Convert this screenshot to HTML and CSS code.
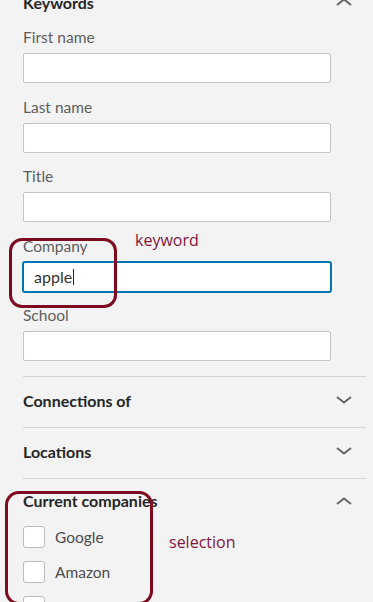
FILE: index.html
```html
<!DOCTYPE html>
<html>
<head>
<meta charset="utf-8">
<link rel="stylesheet" href="styles.css">
</head>
<body>
<div class="panel">
  <section class="group">
    <div class="group-head first">
      <h3 class="group-title">Keywords</h3>
      <svg class="chev" viewBox="0 0 16 8" width="16" height="8"><path d="M1 7 L8 1.5 L15 7" fill="none" stroke="#666" stroke-width="2"/></svg>
    </div>
    <div class="fields">
      <div class="field"><div class="label">First name</div><div class="input"></div></div>
      <div class="field"><div class="label">Last name</div><div class="input"></div></div>
      <div class="field"><div class="label">Title</div><div class="input"></div></div>
      <div class="field"><div class="label">Company</div><div class="input focused"><span class="val">apple</span><span class="caret"></span></div></div>
      <div class="field"><div class="label">School</div><div class="input"></div></div>
    </div>
  </section>
  <section class="group bordered">
    <div class="group-head">
      <h3 class="group-title">Connections of</h3>
      <svg class="chev" viewBox="0 0 16 8" width="16" height="8"><path d="M1 1 L8 6.5 L15 1" fill="none" stroke="#666" stroke-width="2"/></svg>
    </div>
  </section>
  <section class="group bordered">
    <div class="group-head">
      <h3 class="group-title">Locations</h3>
      <svg class="chev" viewBox="0 0 16 8" width="16" height="8"><path d="M1 1 L8 6.5 L15 1" fill="none" stroke="#666" stroke-width="2"/></svg>
    </div>
  </section>
  <section class="group bordered">
    <div class="group-head short">
      <h3 class="group-title">Current companies</h3>
      <svg class="chev" viewBox="0 0 16 8" width="16" height="8"><path d="M1 7 L8 1.5 L15 7" fill="none" stroke="#666" stroke-width="2"/></svg>
    </div>
    <ul class="checks">
      <li class="check"><span class="box"></span><span class="check-label">Google</span></li>
      <li class="check"><span class="box"></span><span class="check-label">Amazon</span></li>
      <li class="check"><span class="box"></span></li>
    </ul>
  </section>
</div>
<div class="note">
  <div class="ring ring-keyword"></div>
  <span class="note-text text-keyword">keyword</span>
  <div class="ring ring-selection"></div>
  <span class="note-text text-selection">selection</span>
</div>
</body>
</html>
```
FILE: styles.css
```css
html, body {
  margin: 0;
  padding: 0;
  background: #f3f3f3;
  height: 602px;
  overflow: hidden;
}
body {
  font-family: Lato, "Liberation Sans", sans-serif;
  position: relative;
}
.panel {
  margin-top: -23px;
  padding: 0 7px 0 23px;
}
.group.bordered {
  border-top: 1px solid #d4d4d4;
}
.group-head {
  box-sizing: border-box;
  height: 50px;
  padding-bottom: 4px;
  display: flex;
  align-items: center;
  justify-content: space-between;
}
.group-head.first {
  padding-bottom: 0;
}
.group-head.short {
  height: 47px;
}
.group-title {
  margin: 0;
  font-size: 16px;
  font-weight: 700;
  color: #262626;
}
.chev {
  margin-right: 14px;
  display: block;
}
.fields {
  padding-bottom: 15px;
}
.field + .field {
  margin-top: 13.5px;
}
.label {
  font-size: 15.5px;
  line-height: 20px;
  color: #5e5e5e;
  margin-bottom: 6px;
}
.input {
  box-sizing: border-box;
  width: 308px;
  height: 30px;
  background: #fff;
  border: 1px solid #c4c4c4;
  border-radius: 2px;
  display: flex;
  align-items: center;
  padding-left: 10px;
}
.input.focused {
  border: 2px solid #0077b5;
  width: 310px;
  height: 32px;
  margin: -1px 0 -1px -1px;
  border-radius: 3px;
}
.val {
  font-size: 16px;
  color: #333;
}
.caret {
  display: inline-block;
  width: 1px;
  height: 16px;
  background: #222;
  margin-left: 1px;
}
.checks {
  list-style: none;
  margin: 0;
  padding: 0;
}
.check {
  display: flex;
  align-items: center;
  height: 22px;
  margin-bottom: 13px;
}
.box {
  box-sizing: border-box;
  width: 22px;
  height: 22px;
  background: #fff;
  border: 1px solid #bdbdbd;
  border-radius: 3px;
  flex: none;
}
.check-label {
  margin-left: 10px;
  font-size: 15.5px;
  color: #4d4d4d;
}
.note {
  position: absolute;
  left: 0;
  top: 0;
}
.ring {
  position: absolute;
  box-sizing: border-box;
  border: 3px solid #7d0a1e;
  border-radius: 13px;
}
.note-text {
  position: absolute;
  font-family: "Open Sans", sans-serif;
  font-size: 16px;
  color: #82133b;
  white-space: nowrap;
}
.ring-keyword { left: 9px; top: 238px; width: 108px; height: 70px; }
.text-keyword { left: 135px; top: 229px; }
.ring-selection { left: 5px; top: 491px; width: 148px; height: 114px; border-radius: 14px; }
.text-selection { left: 169px; top: 531px; }
```
